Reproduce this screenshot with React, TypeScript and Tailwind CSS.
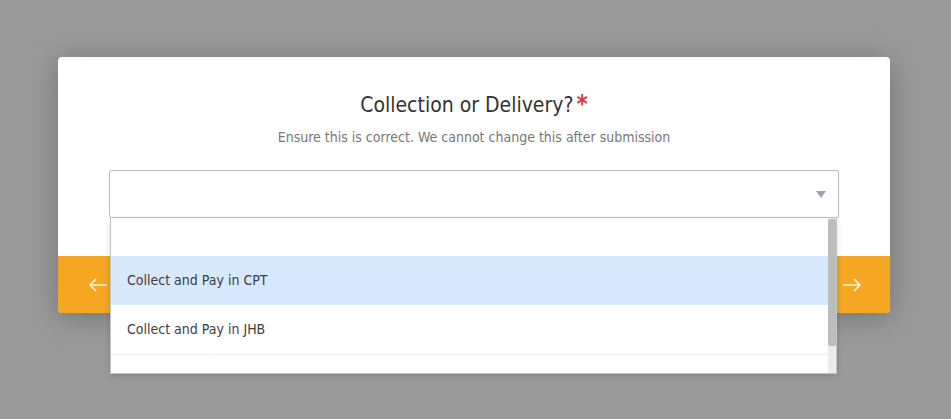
import React from 'react';

const options = ['', 'Collect and Pay in CPT', 'Collect and Pay in JHB', ''];

function ArrowLeft() {
  return (
    <svg width="20" height="14" viewBox="0 0 20 14" fill="none" stroke="#fff3dc" strokeWidth="1.6">
      <path d="M19 7H2M8 1L2 7l6 6" />
    </svg>
  );
}

function ArrowRight() {
  return (
    <svg width="20" height="14" viewBox="0 0 20 14" fill="none" stroke="#fff3dc" strokeWidth="1.6">
      <path d="M1 7h17M12 1l6 6-6 6" />
    </svg>
  );
}

export default function App() {
  return (
    <div
      className="w-[951px] h-[419px] bg-[#9a9a9a] overflow-hidden pt-[57px] pl-[58px]"
      style={{ fontFamily: '"Liberation Sans Narrow", "DejaVu Sans Condensed", sans-serif' }}
    >
      <div className="relative w-[832px] bg-white rounded-[4px] shadow-[0_4px_30px_rgba(0,0,0,0.25)]">
        {/* Body */}
        <div className="h-[199px] px-[51px] pt-[33px] flex flex-col items-center">
          <h2 className="text-[21px] leading-[30px] text-[#333]">
            Collection or Delivery?
            <span className="ml-[3px] text-[24px] leading-[20px] font-bold text-[#e0383e]">*</span>
          </h2>
          <p className="mt-[8px] text-[14px] leading-[18px] text-[#777]">
            Ensure this is correct. We cannot change this after submission
          </p>
          <div className="relative mt-[24px] w-full h-[48px] border border-[#bcbccb] rounded-[2px] flex items-center justify-end pr-[12px]">
            <div className="w-0 h-0 border-l-[5px] border-r-[5px] border-t-[7px] border-l-transparent border-r-transparent border-t-[#9aa3b6]" />
          </div>
        </div>

        {/* Footer */}
        <div className="h-[57px] bg-[#f5a623] rounded-b-[4px] flex items-center justify-between pl-[30px] pr-[28px]">
          <ArrowLeft />
          <ArrowRight />
        </div>

        {/* Dropdown menu */}
        <div className="absolute left-[52px] top-[161px] w-[727px] h-[156px] bg-white border border-[#c4c4cc] border-t-0 shadow-[0_2px_6px_rgba(0,0,0,0.15)] overflow-hidden flex">
          <div className="flex-1 flex flex-col">
            {options.map((opt, i) => (
              <div
                key={i}
                className={
                  (i === 0 ? 'h-[38px] ' : i === 1 ? 'h-[49px] ' : 'h-[50px] ') +
                  (i === 1 ? 'bg-[#d8e8fd] ' : '') +
                  (i === 2 ? 'border-b border-[#f0f0f0] ' : '') +
                  'shrink-0 flex items-center pl-[16px] text-[14px] text-[#3d3d44]'
                }
              >
                {opt}
              </div>
            ))}
          </div>
          <div className="w-[8px] bg-[#ececec] flex flex-col">
            <div className="h-[127px] mt-[1px] bg-[#bdbdbd] rounded-[2px]" />
          </div>
        </div>
      </div>
    </div>
  );
}
